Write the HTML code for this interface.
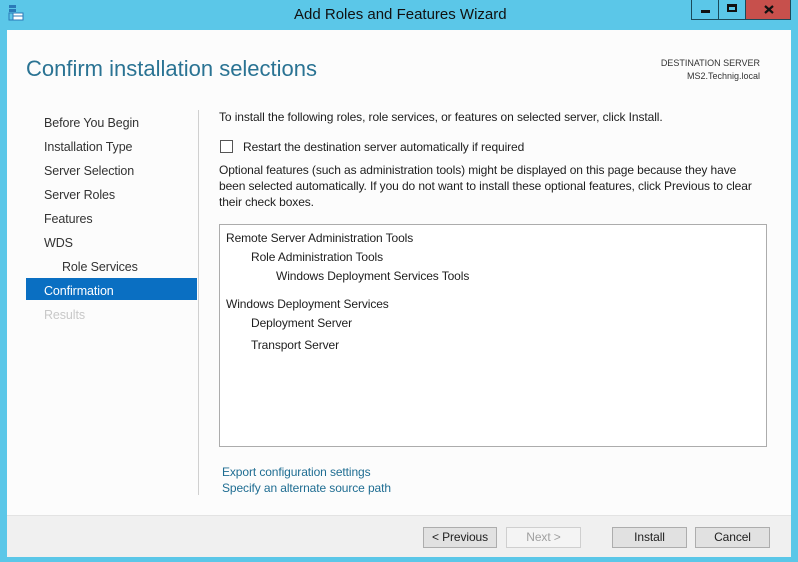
<!DOCTYPE html><html><head><style>
*{margin:0;padding:0;box-sizing:border-box}
body{width:798px;height:562px;background:#5bc7e8;position:relative;overflow:hidden;font-family:"Liberation Sans",sans-serif;font-size:12px;color:#1e1e1e;letter-spacing:-0.1px}
.a{position:absolute;white-space:nowrap}
#main{position:absolute;left:7px;top:30px;width:784px;height:527px;background:#fcfcfc}
.btn{position:absolute;top:527px;height:21px;border:1px solid #adadad;background:#e1e1e1;text-align:center;line-height:19px;font-size:12px}
.nav{position:absolute;left:44px;font-size:12.5px;color:#333}
.lk{color:#1f6d92}
</style></head><body>
<svg class="a" style="left:8px;top:4px" width="16" height="18" viewBox="0 0 16 18"><rect x="1" y="1" width="7" height="3" fill="#2a7ab8"/><rect x="1" y="5" width="7" height="3" fill="#2a7ab8"/><rect x="1" y="9" width="6" height="7" fill="none" stroke="#2a7ab8"/><rect x="5" y="9" width="10" height="7" fill="#fff" stroke="#2a7ab8"/><line x1="5" y1="12" x2="15" y2="12" stroke="#2a7ab8"/></svg>
<div class="a" style="left:294px;top:6px;font-size:15px;color:#111;letter-spacing:0">Add Roles and Features Wizard</div>
<div class="a" style="left:691px;top:0;width:28px;height:20px;border:1px solid #1a4a5a;border-top:none"><div class="a" style="left:9px;top:10px;width:9px;height:3px;background:#111"></div></div>
<div class="a" style="left:718px;top:0;width:28px;height:20px;border:1px solid #1a4a5a;border-top:none"><div class="a" style="left:8px;top:4px;width:10px;height:8px;border:2px solid #111;border-top-width:3px"></div></div>
<div class="a" style="left:745px;top:0;width:46px;height:20px;background:#c7504c;border:1px solid #1a4a5a;border-top:none">
<svg class="a" style="left:18px;top:5px" width="10" height="9" viewBox="0 0 10 9"><path d="M1 1L9 8M9 1L1 8" stroke="#111" stroke-width="2.2"/></svg></div>
<div id="main"></div>
<div class="a" style="left:26px;top:56px;font-size:22px;color:#2a7393;letter-spacing:0">Confirm installation selections</div>
<div class="a" style="right:38px;top:57px;font-size:9px;text-align:right;line-height:13px;color:#333;letter-spacing:0">DESTINATION SERVER<br>MS2.Technig.local</div>
<div class="a" style="left:198px;top:110px;width:1px;height:385px;background:#d0d0d0"></div>
<div class="nav" style="top:116px">Before You Begin</div>
<div class="nav" style="top:140px">Installation Type</div>
<div class="nav" style="top:164px">Server Selection</div>
<div class="nav" style="top:188px">Server Roles</div>
<div class="nav" style="top:212px">Features</div>
<div class="nav" style="top:236px">WDS</div>
<div class="nav" style="top:260px;left:62px">Role Services</div>
<div class="a" style="left:26px;top:278px;width:171px;height:22px;background:#0a6fc2"></div>
<div class="nav" style="top:284px;color:#fff">Confirmation</div>
<div class="nav" style="top:308px;color:#c8c8c8">Results</div>
<div class="a" style="left:219px;top:110px">To install the following roles, role services, or features on selected server, click Install.</div>
<div class="a" style="left:220px;top:140px;width:13px;height:13px;border:1px solid #555;background:#fff"></div>
<div class="a" style="left:243px;top:140px">Restart the destination server automatically if required</div>
<div class="a" style="left:219px;top:162px;line-height:16px">Optional features (such as administration tools) might be displayed on this page because they have<br>been selected automatically. If you do not want to install these optional features, click Previous to clear<br>their check boxes.</div>
<div class="a" style="left:219px;top:224px;width:548px;height:223px;border:1px solid #acacac;background:#fff"></div>
<div class="a" style="left:226px;top:231px">Remote Server Administration Tools</div>
<div class="a" style="left:251px;top:250px">Role Administration Tools</div>
<div class="a" style="left:276px;top:269px">Windows Deployment Services Tools</div>
<div class="a" style="left:226px;top:297px">Windows Deployment Services</div>
<div class="a" style="left:251px;top:316px">Deployment Server</div>
<div class="a" style="left:251px;top:338px">Transport Server</div>
<div class="a lk" style="left:222px;top:465px">Export configuration settings</div>
<div class="a lk" style="left:222px;top:481px">Specify an alternate source path</div>
<div class="a" style="left:7px;top:515px;width:784px;height:42px;background:#f0f0f0;border-top:1px solid #e3e3e3"></div>
<div class="btn" style="left:423px;width:74px">&lt; Previous</div>
<div class="btn" style="left:506px;width:75px;background:#f4f4f4;border-color:#cfcfcf;color:#a0a0a0">Next &gt;</div>
<div class="btn" style="left:612px;width:75px">Install</div>
<div class="btn" style="left:695px;width:75px">Cancel</div>
</body></html>
